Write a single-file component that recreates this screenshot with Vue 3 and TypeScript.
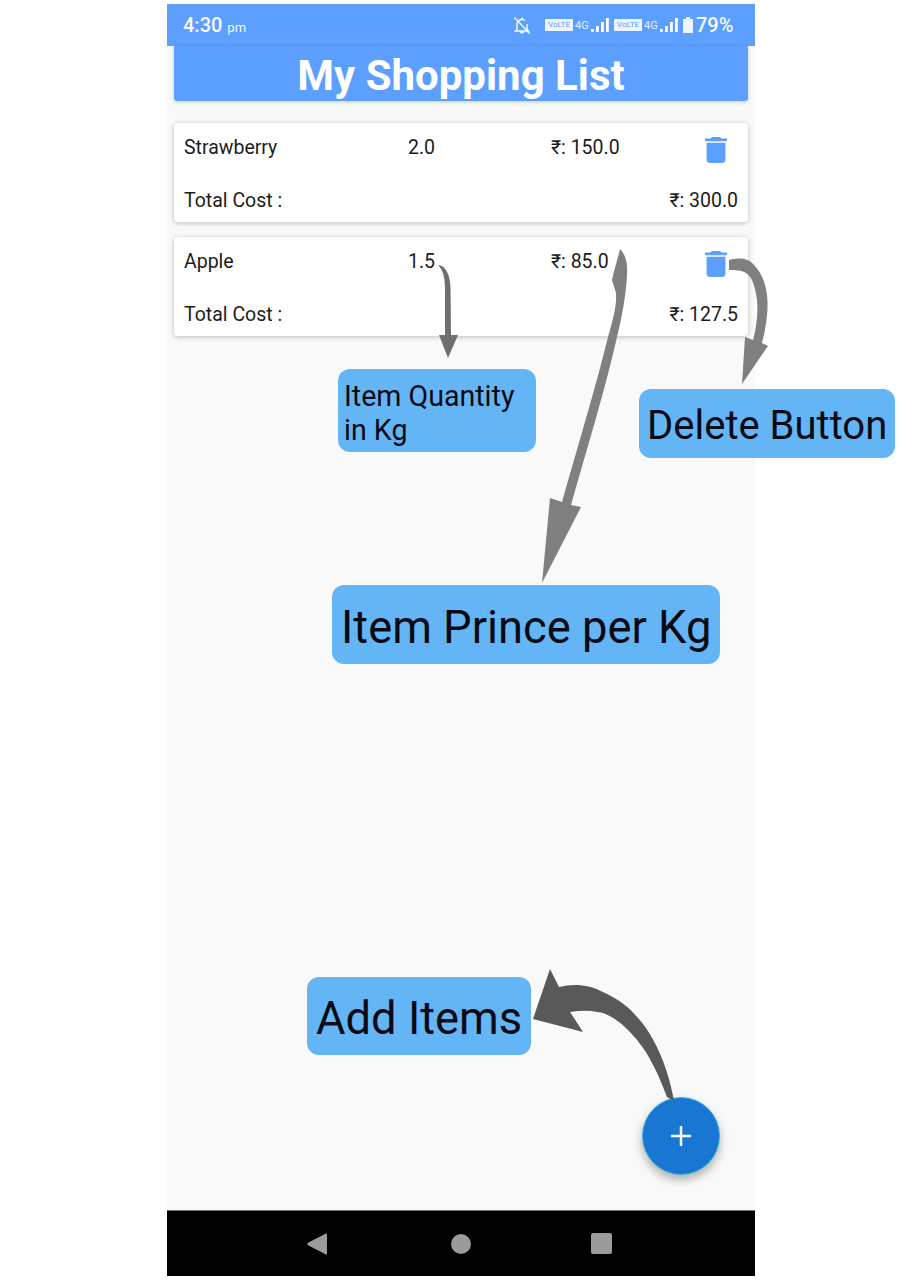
<script setup lang="ts">
interface Item {
  name: string
  qty: string
  price: string
  total: string
}

const items: Item[] = [
  { name: 'Strawberry', qty: '2.0', price: '150.0', total: '300.0' },
  { name: 'Apple', qty: '1.5', price: '85.0', total: '127.5' },
]

const sims = [1, 2]
const bars = [
  { x: 0, y: 11, h: 3 },
  { x: 5, y: 8, h: 6 },
  { x: 10, y: 4, h: 10 },
  { x: 15, y: 0, h: 14 },
]
</script>

<template>
  <div class="page">
    <div class="phone">
      <header class="status">
        <span class="clock">4:30 <small>pm</small></span>
        <div class="status-right">
          <svg class="bell" viewBox="0 0 18 17" width="18" height="17">
            <path d="M4 12.500V7.500a5 5 0 0 1 8-4M14 7v5.500l1.500 1.500H2.500L4 12.500M7 15.500h4M8 1.500h2" fill="none" stroke="#fff" stroke-width="1.500" opacity=".9" />
            <path d="M1.500 .5L16.500 16.500" stroke="#fff" stroke-width="1.500" opacity=".9" />
          </svg>
          <div v-for="s in sims" :key="s" class="sim">
            <span class="volte">VoLTE</span>
            <span class="net">4G</span>
            <svg class="signal" viewBox="0 0 18 14" width="18" height="14">
              <rect v-for="b in bars" :key="b.x" :x="b.x" :y="b.y" width="2.800" :height="b.h" fill="#fff" />
            </svg>
          </div>
          <svg class="battery" viewBox="0 0 10 16" width="10" height="16">
            <path d="M3 0h4v2h3v14H0V2h3z" fill="#fff" opacity=".9" />
          </svg>
          <span class="percent">79%</span>
        </div>
      </header>

      <div class="appbar">My Shopping List</div>

      <main class="list">
        <section v-for="item in items" :key="item.name" class="card">
          <div class="row">
            <span>{{ item.name }}</span>
            <span>{{ item.qty }}</span>
            <span>₹: {{ item.price }}</span>
            <svg class="trash" viewBox="5 3 14 18" width="22" height="26" preserveAspectRatio="none">
              <path d="M6 19c0 1.100.9 2 2 2h8c1.100 0 2-.9 2-2V7H6v12zM19 4h-3.500l-1-1h-5l-1 1H5v2h14V4z" fill="#5c9fff" />
            </svg>
          </div>
          <div class="total">
            <span>Total Cost :</span>
            <span>₹: {{ item.total }}</span>
          </div>
        </section>
      </main>

      <nav class="navbar">
        <svg viewBox="0 0 20 22" width="20" height="22"><path d="M19 .5c.6-.3 1 .1 1 .6v19.800c0 .5-.4.9-1 .6L1 12.300c-.8-.5-.8-2 0-2.500z" fill="#9b9b9b" /></svg>
        <span class="nav-circle"></span>
        <span class="nav-square"></span>
      </nav>
    </div>

    <div class="tag tag-qty">Item Quantity<br />in Kg</div>
    <div class="tag tag-delete">Delete Button</div>
    <div class="tag tag-price">Item Prince per Kg</div>
    <div class="tag tag-add">Add Items</div>

    <button class="fab" type="button">
      <svg viewBox="0 0 22 22" width="22" height="22">
        <path d="M11 1v20M1 11h20" stroke="#fff" stroke-width="2.500" fill="none" />
      </svg>
    </button>

    <svg class="arrows" viewBox="0 0 922 1280" width="922" height="1280">
      <path d="M438 265C445 265 450 274 450.500 287L451 335H458L448 358L439 335H445L445 290C445 277 443 270 438 265Z" fill="#6f6f6f" />
      <path d="M620 249C625 254 628 262 627 275C626 295 622 317 617 337C605 390 588 445 571 505L581 507L542 583L550 498L562 502C578 445 595 390 608 337C613 320 617 305 616 293L612 280C614 270 618 258 620 249Z" fill="#808080" />
      <path d="M729 260C738 258 747 257 754 265C766 277 769 297 767 315C766 326 764 335 762 343L768 346L742 384L745 337L753 340C757 325 758 312 757 300C755 285 752 277 746 273C741 270 735 270 729 270Z" fill="#808080" />
      <path d="M550 969L559 987C575 983 590 985 603 992C620 1000 630 1008 637 1017C652 1032 668 1065 674 1101L667 1097C662 1085 660 1078 653 1065C648 1055 645 1050 640 1044C630 1030 612 1013 597 1012C588 1010 579 1011 570 1012L583 1032L533 1019Z" fill="#595959" />
    </svg>
  </div>
</template>

<style>
body {
  background: #fff;
}
</style>

<style scoped>
.page {
  position: relative;
  box-sizing: border-box;
  width: 922px;
  height: 1280px;
  padding: 4px 167px;
  font-family: Roboto, "Liberation Sans", "Noto Sans", sans-serif;
  background: #fff;
  overflow: hidden;
}

.phone {
  display: flex;
  flex-direction: column;
  height: 1272px;
  width: 588px;
  background: #f9f9f9;
}

.status {
  display: flex;
  align-items: center;
  justify-content: space-between;
  flex: none;
  height: 42px;
  padding: 0 23px 0 16px;
  background: #5c9fff;
  color: #fff;
}

.clock {
  font-size: 20px;
  font-weight: 500;
  opacity: 0.95;
}

.clock small {
  font-size: 13px;
  font-weight: 400;
}

.status-right {
  display: flex;
  align-items: center;
}

.bell {
  margin-right: 14px;
}

.sim {
  display: flex;
  align-items: center;
  margin-right: 5px;
}

.volte {
  width: 28px;
  height: 12px;
  background: #eef4ff;
  color: #5c9fff;
  font-size: 8px;
  line-height: 12px;
  text-align: center;
}

.net {
  width: 13px;
  margin: 0 3px 0 2px;
  font-size: 11px;
  color: #e4eeff;
}

.battery {
  margin-right: 3px;
}

.percent {
  width: 36px;
  font-size: 20px;
  font-weight: 500;
  white-space: nowrap;
  opacity: 0.95;
}

.appbar {
  flex: none;
  height: 55px;
  margin: 0 7px;
  background: #5c9fff;
  border-radius: 0 0 3px 3px;
  box-shadow: 0 1px 4px rgba(0, 0, 0, 0.18);
  color: #fff;
  font-size: 42px;
  font-weight: 700;
  line-height: 60px;
  text-align: center;
}

.list {
  flex: 1;
  display: flex;
  flex-direction: column;
  gap: 15px;
  padding: 22px 7px 0;
}

.card {
  display: flex;
  flex-direction: column;
  justify-content: space-between;
  box-sizing: border-box;
  height: 99px;
  padding: 11px 10px 7px;
  background: #fff;
  border-radius: 4px;
  box-shadow: 0 1px 5px rgba(0, 0, 0, 0.25);
  color: #1c1c1c;
  font-size: 19.500px;
}

.row {
  display: grid;
  grid-template-columns: 224px 143px 1fr auto;
  align-items: start;
  line-height: 28px;
}

.trash {
  margin: 3px 11px 0 0;
}

.total {
  display: flex;
  justify-content: space-between;
  line-height: 28px;
}

.navbar {
  display: flex;
  flex: none;
  align-items: center;
  justify-content: space-between;
  height: 66px;
  padding: 0 143px 0 140px;
  background: #000;
  border-top: 1px solid #777;
  box-sizing: border-box;
}

.nav-circle {
  width: 20px;
  height: 20px;
  margin-left: 3px;
  border-radius: 50%;
  background: #9b9b9b;
}

.nav-square {
  width: 21px;
  height: 21px;
  border-radius: 2px;
  background: #9b9b9b;
}

.tag {
  position: absolute;
  box-sizing: border-box;
  background: #64b5f6;
  color: #0a0a14;
  border-radius: 12px;
  white-space: nowrap;
}

.tag-qty {
  left: 338px;
  top: 369px;
  width: 198px;
  height: 83px;
  padding: 10px 6px;
  font-size: 28.600px;
  line-height: 34px;
}

.tag-delete {
  left: 639px;
  top: 389px;
  width: 256px;
  height: 69px;
  padding-left: 8px;
  font-size: 40px;
  line-height: 74px;
}

.tag-price {
  left: 332px;
  top: 585px;
  width: 388px;
  height: 79px;
  padding-left: 9px;
  font-size: 45.300px;
  line-height: 86px;
}

.tag-add {
  left: 307px;
  top: 977px;
  width: 224px;
  height: 78px;
  padding-left: 9px;
  font-size: 45.300px;
  line-height: 84px;
}

.arrows {
  position: absolute;
  left: 0;
  top: 0;
  pointer-events: none;
}

.fab {
  position: absolute;
  left: 642px;
  top: 1097px;
  display: flex;
  align-items: center;
  justify-content: center;
  box-sizing: border-box;
  width: 78px;
  height: 78px;
  padding: 0;
  border: 1px solid #35b6dc;
  border-radius: 50%;
  background: #1976d2;
  box-shadow: 0 5px 10px rgba(0, 0, 0, 0.3);
}
</style>
